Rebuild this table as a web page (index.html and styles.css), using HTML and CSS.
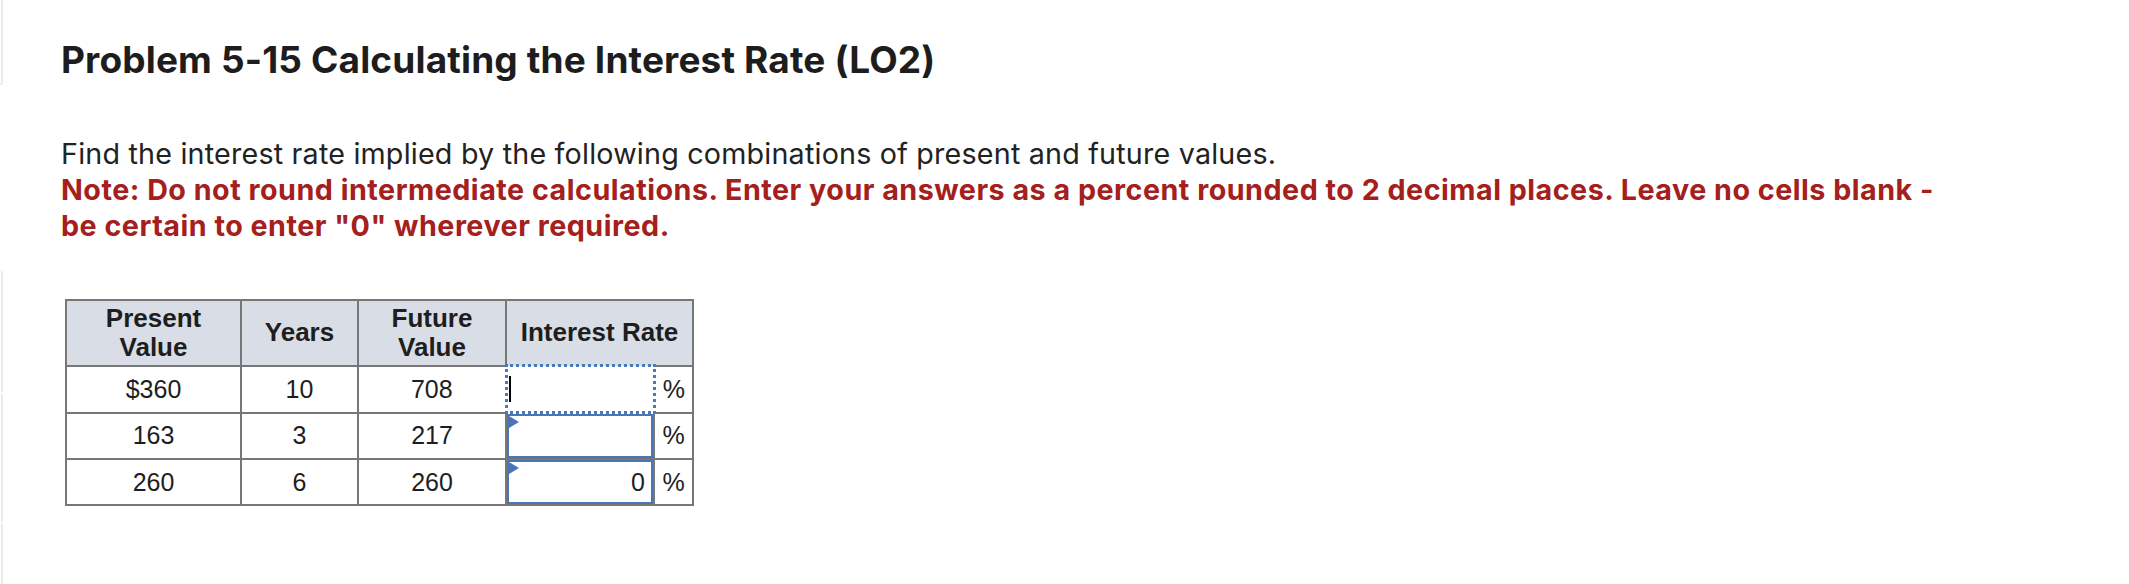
FILE: index.html
```html
<!DOCTYPE html>
<html lang="en">
<head>
<meta charset="utf-8">
<title>Problem 5-15</title>
<link rel="stylesheet" href="styles.css">
</head>
<body>
<div class="page">
  <aside class="edge">
    <div class="seg seg-top"></div>
    <div class="seg seg-a"></div>
    <div class="seg seg-b"></div>
    <div class="seg seg-c"></div>
  </aside>
  <main class="content">
    <h1 class="title">Problem 5-15 Calculating the Interest Rate (LO2)</h1>
    <div class="prompt">
      <p class="line">Find the interest rate implied by the following combinations of present and future values.</p>
      <p class="note">Note: Do not round intermediate calculations. Enter your answers as a percent rounded to 2 decimal places. Leave no cells blank - be certain to enter "0" wherever required.</p>
    </div>
    <table class="grid">
      <colgroup>
        <col class="c1"><col class="c2"><col class="c3"><col class="c4"><col class="c5">
      </colgroup>
      <thead>
        <tr class="head">
          <th>Present<br>Value</th>
          <th>Years</th>
          <th>Future<br>Value</th>
          <th colspan="2">Interest Rate</th>
        </tr>
      </thead>
      <tbody>
        <tr>
          <td>$360</td>
          <td>10</td>
          <td>708</td>
          <td class="in focus"><span class="caret"></span></td>
          <td class="pct pct-focus">%</td>
        </tr>
        <tr>
          <td>163</td>
          <td>3</td>
          <td>217</td>
          <td class="in"><div class="box"></div></td>
          <td class="pct">%</td>
        </tr>
        <tr>
          <td>260</td>
          <td>6</td>
          <td>260</td>
          <td class="in"><div class="box">0</div></td>
          <td class="pct">%</td>
        </tr>
      </tbody>
    </table>
  </main>
</div>
</body>
</html>
```
FILE: styles.css
```css
html, body {
  margin: 0;
  padding: 0;
  background: #ffffff;
}

.page {
  display: flex;
  min-height: 584px;
}

.edge {
  width: 3px;
  display: flex;
  flex-direction: column;
}

.seg {
  border-right: 2px solid #ebebeb;
}

.seg-top {
  height: 83px;
  border-bottom: 2px solid #ebebeb;
  border-bottom-right-radius: 6px;
}

.seg-a {
  margin-top: 185px;
  height: 122px;
  border-top-right-radius: 3px;
}

.seg-b {
  margin-top: 2px;
  height: 128px;
}

.seg-c {
  margin-top: 2px;
  flex: 1;
}

.content {
  padding-left: 58px;
  font-family: Inter, Lato, sans-serif;
  color: #222222;
}

.title {
  margin: 40px 0 0;
  font-size: 37px;
  line-height: 40px;
  font-weight: 700;
  letter-spacing: 0.15px;
  color: #1d1d1d;
}

.prompt {
  margin-top: 56px;
  width: 1900px;
  font-size: 28.7px;
  line-height: 36px;
}

.line, .note {
  margin: 0;
}

.line {
  letter-spacing: 0.2px;
}

.note {
  color: #a5201c;
  font-weight: 700;
  letter-spacing: 0.5px;
}

.grid {
  margin-top: 55px;
  margin-left: 4px;
  border-collapse: collapse;
  table-layout: fixed;
  width: 629px;
  font-family: "Liberation Sans", Arial, sans-serif;
  font-size: 25px;
  color: #1e1e1e;
}

.c1 { width: 175px; }
.c2 { width: 117px; }
.c3 { width: 148px; }
.c4 { width: 148px; }
.c5 { width: 39px; }

.grid th, .grid td {
  border: 2px solid #777777;
  text-align: center;
  padding: 0;
}

.head th {
  background: #d9dde6;
  height: 63px;
  font-size: 26px;
  font-weight: 700;
  line-height: 29px;
}

.grid tbody td {
  height: 44px;
}

.in {
  position: relative;
}

.in.focus {
  border: 3px dotted #4a7abd;
}

.pct-focus {
  border-top: 3px dotted #4a7abd;
}

.caret {
  display: block;
  width: 2px;
  height: 26px;
  margin-left: 1px;
  background: #000000;
}

.box {
  position: relative;
  box-sizing: border-box;
  height: 44px;
  border: 2px solid #4a76b8;
  text-align: right;
  padding-right: 6px;
  line-height: 40px;
}

.box::before {
  content: "";
  position: absolute;
  left: 0;
  top: 0;
  border-left: 10px solid #4a76b8;
  border-top: 6px solid transparent;
  border-bottom: 6px solid transparent;
}
```
